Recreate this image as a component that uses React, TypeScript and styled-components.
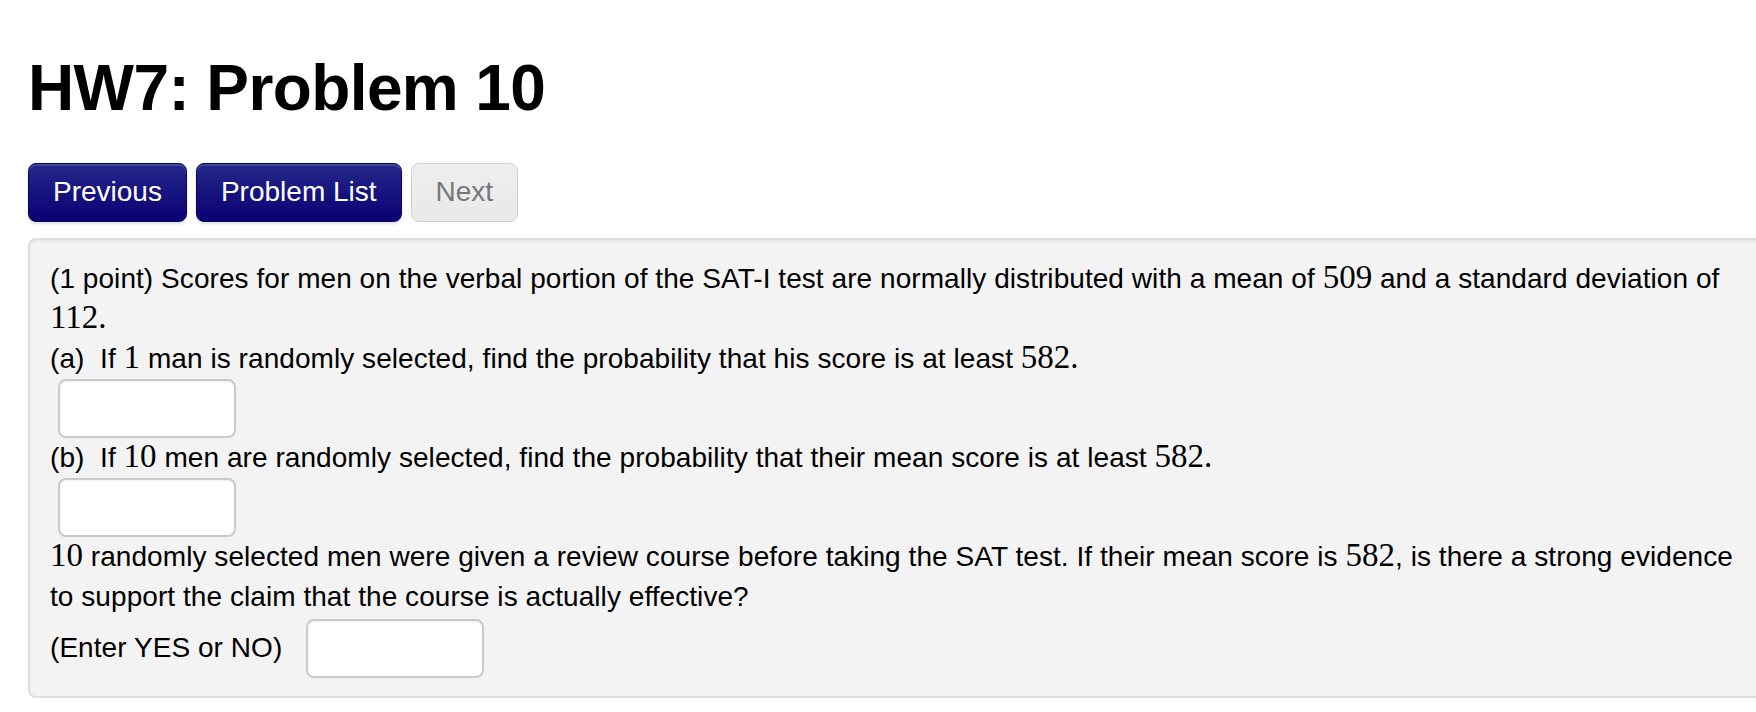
import React from "react";
import styled, { createGlobalStyle } from "styled-components";

const Global = createGlobalStyle`
  html, body {
    margin: 0;
    padding: 0;
    background: #ffffff;
    overflow: hidden;
  }
  body {
    font-family: "Liberation Sans", Arial, Helvetica, sans-serif;
    color: #000;
  }
`;

const Page = styled.div`
  padding: 53px 0 0 28px;
  overflow: hidden;
`;

const Title = styled.h1`
  margin: 0;
  font-family: "Liberation Sans", Arial, sans-serif;
  font-weight: 700;
  font-size: 64px;
  line-height: 70px;
  letter-spacing: -0.6px;
  color: #000;
`;

const NavBar = styled.div`
  display: flex;
  gap: 9px;
  margin-top: 40px;
`;

const NavButton = styled.button<{ $disabled?: boolean }>`
  box-sizing: border-box;
  height: 59px;
  padding: 8px 24px 9px;
  font-family: "Liberation Sans", Arial, sans-serif;
  font-size: 28px;
  line-height: 40px;
  border-radius: 8px;
  cursor: pointer;
  border: 1px solid ${(p) => (p.$disabled ? "#d2d2d2" : "#08085a")};
  color: ${(p) => (p.$disabled ? "#777" : "#fff")};
  background: ${(p) =>
    p.$disabled
      ? "linear-gradient(#eeeeee, #e9e9e9)"
      : "linear-gradient(#24288a, #0b0073)"};
  box-shadow: ${(p) =>
    p.$disabled
      ? "none"
      : "inset 0 2px 0 rgba(255,255,255,0.15), 0 2px 3px rgba(0,0,0,0.12)"};
`;

const Panel = styled.div`
  margin-top: 16px;
  margin-right: -40px;
  padding: 19px 20px 17px;
  background: #f3f3f3;
  border: 2px solid #dddddd;
  border-radius: 8px;
  box-shadow: inset 0 2px 3px rgba(0, 0, 0, 0.05);
  font-size: 28px;
  line-height: 40px;
  letter-spacing: 0.06px;
  color: #000;
`;

const Line = styled.div`
  white-space: nowrap;
  height: 40px;
`;

const Math = styled.span`
  font-family: "Liberation Serif", "Times New Roman", serif;
  font-size: 33px;
  line-height: 1;
  letter-spacing: 0;
`;

const AnswerRow = styled.div<{ $tall?: boolean }>`
  display: flex;
  align-items: center;
  height: ${(p) => (p.$tall ? 62 : 59)}px;
`;

const Answer = styled.input<{ $offset: number }>`
  box-sizing: border-box;
  width: 178px;
  height: 59px;
  margin-left: ${(p) => p.$offset}px;
  background: #fff;
  border: 2px solid #c9c9c9;
  border-radius: 8px;
  box-shadow: inset 0 1px 2px rgba(0, 0, 0, 0.06);
  font-size: 28px;
  font-family: "Liberation Sans", Arial, sans-serif;
  outline: none;
`;

const Label = styled.span`
  white-space: nowrap;
`;

export default function App() {
  return (
    <>
      <Global />
      <Page>
        <Title>HW7: Problem 10</Title>
        <NavBar>
          <NavButton>Previous</NavButton>
          <NavButton>Problem List</NavButton>
          <NavButton $disabled>Next</NavButton>
        </NavBar>
        <Panel>
          <Line>
            (1 point) Scores for men on the verbal portion of the SAT-I test are
            normally distributed with a mean of <Math>509</Math> and a standard
            deviation of
          </Line>
          <Line>
            <Math>112.</Math>
          </Line>
          <Line>
            (a)&nbsp; If <Math>1</Math> man is randomly selected, find the
            probability that his score is at least <Math>582.</Math>
          </Line>
          <AnswerRow>
            <Answer $offset={8} />
          </AnswerRow>
          <Line>
            (b)&nbsp; If <Math>10</Math> men are randomly selected, find the
            probability that their mean score is at least <Math>582.</Math>
          </Line>
          <AnswerRow>
            <Answer $offset={8} />
          </AnswerRow>
          <Line>
            <Math>10</Math> randomly selected men were given a review course
            before taking the SAT test. If their mean score is <Math>582</Math>,
            is there a strong evidence
          </Line>
          <Line>to support the claim that the course is actually effective?</Line>
          <AnswerRow $tall>
            <Label>(Enter YES or NO)</Label>
            <Answer $offset={24} />
          </AnswerRow>
        </Panel>
      </Page>
    </>
  );
}
